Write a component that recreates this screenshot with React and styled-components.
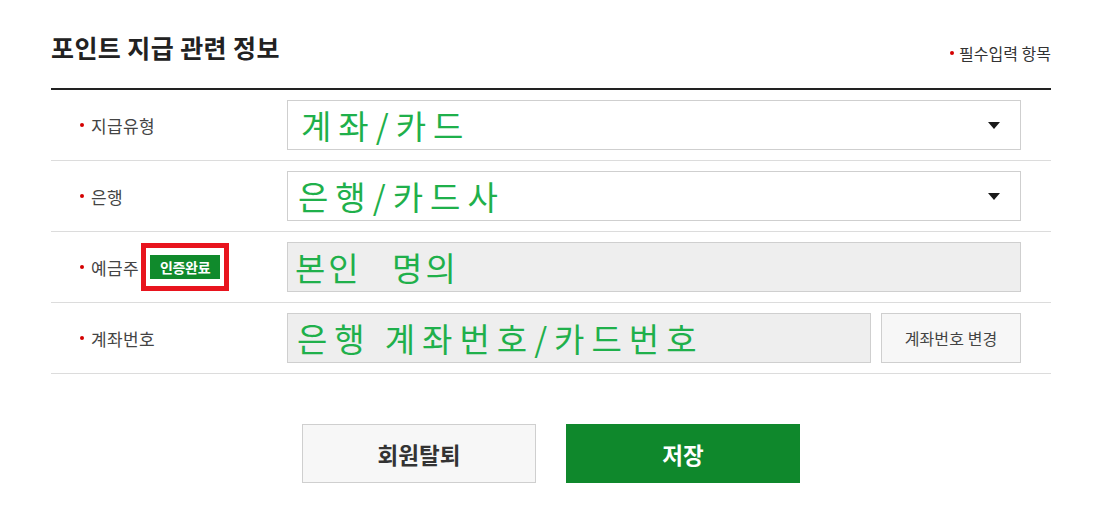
import React from "react";
import styled, { createGlobalStyle } from "styled-components";

const Global = createGlobalStyle`
  html, body { margin: 0; padding: 0; background: #fff; }
  body { font-family: "Noto Sans CJK KR", "Noto Sans", sans-serif; color: #333; }
  * { box-sizing: border-box; }
`;

const Page = styled.div`
  width: 1000px;
  margin-left: 51px;
`;

const Header = styled.div`
  height: 88px;
  display: flex;
  justify-content: space-between;
  align-items: flex-start;
`;

const Title = styled.h2`
  margin: 30px 0 0;
  font-size: 25px;
  line-height: 34px;
  font-weight: 700;
  letter-spacing: 0.4px;
  color: #222;
`;

const Required = styled.div`
  margin-top: 43px;
  display: flex;
  align-items: center;
  font-size: 16px;
  line-height: 20px;
  color: #333;
`;

const Dot = styled.span`
  display: inline-block;
  width: 4px;
  height: 4px;
  border-radius: 50%;
  background: #d40000;
  margin-right: ${(p) => p.$gap || 7}px;
`;

const Table = styled.div`
  border-top: 2px solid #222;
`;

const Row = styled.div`
  display: flex;
  align-items: center;
  padding: 10px 30px 10px 0;
  border-bottom: 1px solid #dcdcdc;
`;

const Label = styled.div`
  width: 236px;
  flex-shrink: 0;
  padding-left: 29px;
  display: flex;
  align-items: center;
  font-size: 17px;
  letter-spacing: 0.4px;
  color: #444;
`;

const Mark = styled.span`
  display: inline-flex;
  margin-left: 2px;
  border: 5px solid #e8141e;
  padding: 7px 4px;
  background: #fff;
`;

const Badge = styled.span`
  display: inline-flex;
  align-items: center;
  justify-content: center;
  width: 70px;
  height: 24px;
  background: #108a2c;
  color: #fff;
  font-size: 14px;
  font-weight: 700;
  letter-spacing: -0.3px;
`;

const Field = styled.div`
  flex: 1;
  height: 50px;
  display: flex;
  align-items: center;
  justify-content: space-between;
  border: 1px solid #cfcfcf;
  background: ${(p) => (p.$readOnly ? "#eeeeee" : "#fff")};
  padding: 0 20px 0 ${(p) => p.$pad}px;
  overflow: hidden;
`;

const Value = styled.span`
  font-size: 33px;
  line-height: 48px;
  color: #1fb04b;
  white-space: pre;
  letter-spacing: ${(p) => p.$ls}px;
  word-spacing: ${(p) => p.$ws || 0}px;
`;

const Arrow = styled.span`
  width: 0;
  height: 0;
  border-left: 6px solid transparent;
  border-right: 6px solid transparent;
  border-top: 7px solid #1a1a1a;
`;

const SideButton = styled.button`
  width: 140px;
  height: 50px;
  margin-left: 10px;
  flex-shrink: 0;
  border: 1px solid #cfcfcf;
  background: #f7f7f7;
  font-family: inherit;
  font-size: 16px;
  letter-spacing: 0.1px;
  color: #444;
  padding: 0;
`;

const Actions = styled.div`
  display: flex;
  justify-content: center;
  gap: 30px;
  margin-top: 50px;
`;

const ActionButton = styled.button`
  width: 234px;
  height: 59px;
  border: 1px solid ${(p) => (p.$primary ? "#0f882c" : "#cfcfcf")};
  background: ${(p) => (p.$primary ? "#0f882c" : "#f7f7f7")};
  color: ${(p) => (p.$primary ? "#fff" : "#333")};
  font-family: inherit;
  font-size: 22.5px;
  font-weight: 700;
  padding: 0;
`;

export default function App() {
  return (
    <>
      <Global />
      <Page>
        <Header>
          <Title>포인트 지급 관련 정보</Title>
          <Required>
            <Dot $gap={5} />
            필수입력 항목
          </Required>
        </Header>
        <Table>
          <Row>
            <Label>
              <Dot />
              지급유형
            </Label>
            <Field $pad={13}>
              <Value $ls={7}>계좌/카드</Value>
              <Arrow />
            </Field>
          </Row>
          <Row>
            <Label>
              <Dot />
              은행
            </Label>
            <Field $pad={10}>
              <Value $ls={7}>은행/카드사</Value>
              <Arrow />
            </Field>
          </Row>
          <Row>
            <Label>
              <Dot />
              예금주
              <Mark>
                <Badge>인증완료</Badge>
              </Mark>
            </Label>
            <Field $readOnly $pad={7}>
              <Value $ls={3} $ws={4.8}>본인  명의</Value>
            </Field>
          </Row>
          <Row>
            <Label>
              <Dot />
              계좌번호
            </Label>
            <Field $readOnly $pad={9}>
              <Value $ls={7} $ws={-7.9}>은행  계좌번호/카드번호</Value>
            </Field>
            <SideButton>계좌번호 변경</SideButton>
          </Row>
        </Table>
        <Actions>
          <ActionButton>회원탈퇴</ActionButton>
          <ActionButton $primary>저장</ActionButton>
        </Actions>
      </Page>
    </>
  );
}
